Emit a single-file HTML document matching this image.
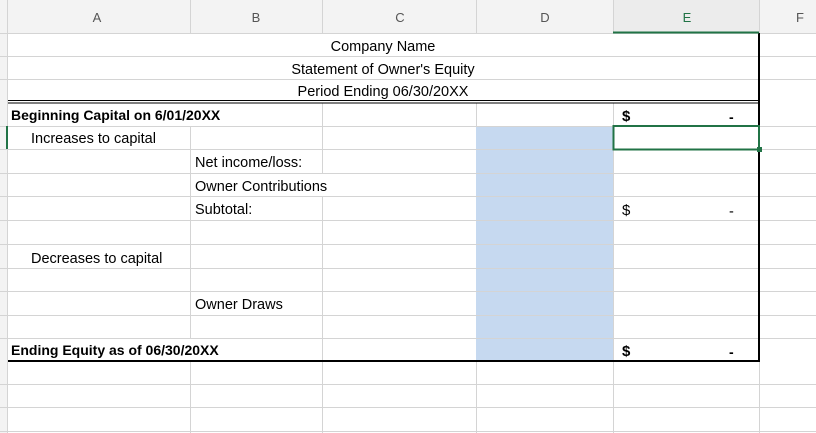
<!DOCTYPE html>
<html><head><style>
html,body{margin:0;padding:0;background:#fff;width:816px;height:433px;overflow:hidden}
svg{display:block}
text{font-family:"Liberation Sans",Arial,sans-serif;font-size:14.5px;fill:#000}
.h{fill:#555;font-size:13px}
.b{font-weight:bold;font-size:14px}
</style></head><body>
<svg width="816" height="433" viewBox="0 0 816 433" xmlns="http://www.w3.org/2000/svg">
<rect x="0" y="0" width="816" height="33" fill="#f3f3f3"/>
<rect x="613" y="0" width="146" height="33" fill="#ececec"/>
<rect x="0" y="0" width="7" height="433" fill="#f3f3f3"/>
<rect x="476" y="126" width="137" height="235" fill="#c6d9f0"/>
<g stroke="#d4d4d4" stroke-width="1">
 <line x1="7.5" y1="0" x2="7.5" y2="433"/>
 <line x1="190.5" y1="0" x2="190.5" y2="33"/>
 <line x1="322.5" y1="0" x2="322.5" y2="33"/>
 <line x1="476.5" y1="0" x2="476.5" y2="33"/>
 <line x1="613.5" y1="0" x2="613.5" y2="33"/>
 <line x1="759.5" y1="0" x2="759.5" y2="433"/>
 <line x1="0" y1="33.5" x2="816" y2="33.5"/>
 <line x1="0" y1="56.5" x2="816" y2="56.5"/>
 <line x1="0" y1="79.5" x2="816" y2="79.5"/>
 <line x1="0" y1="126.5" x2="816" y2="126.5"/>
 <line x1="0" y1="149.5" x2="816" y2="149.5"/>
 <line x1="0" y1="173.5" x2="816" y2="173.5"/>
 <line x1="0" y1="196.5" x2="816" y2="196.5"/>
 <line x1="0" y1="220.5" x2="816" y2="220.5"/>
 <line x1="0" y1="244.5" x2="816" y2="244.5"/>
 <line x1="0" y1="268.5" x2="816" y2="268.5"/>
 <line x1="0" y1="291.5" x2="816" y2="291.5"/>
 <line x1="0" y1="315.5" x2="816" y2="315.5"/>
 <line x1="0" y1="338.5" x2="816" y2="338.5"/>
 <line x1="0" y1="384.5" x2="816" y2="384.5"/>
 <line x1="0" y1="407.5" x2="816" y2="407.5"/>
 <line x1="0" y1="431.5" x2="816" y2="431.5"/>
 <line x1="190.5" y1="126" x2="190.5" y2="338"/>
 <line x1="190.5" y1="361" x2="190.5" y2="433"/>
 <line x1="322.5" y1="103" x2="322.5" y2="173"/>
 <line x1="322.5" y1="196" x2="322.5" y2="433"/>
 <line x1="476.5" y1="103" x2="476.5" y2="126"/>
 <line x1="476.5" y1="361" x2="476.5" y2="433"/>
 <line x1="613.5" y1="103" x2="613.5" y2="433"/>
</g>
<line x1="8" y1="100.5" x2="760" y2="100.5" stroke="#000" stroke-width="1"/>
<line x1="8" y1="103" x2="760" y2="103" stroke="#000" stroke-width="1"/>
<line x1="759" y1="33" x2="759" y2="362" stroke="#000" stroke-width="2"/>
<line x1="8" y1="361" x2="760" y2="361" stroke="#000" stroke-width="2"/>
<line x1="613" y1="32.5" x2="759" y2="32.5" stroke="#217346" stroke-width="2"/>
<rect x="613.5" y="126" width="145.5" height="23.5" fill="none" stroke="#217346" stroke-width="2"/>
<rect x="757" y="147" width="5" height="5" fill="#217346"/>
<line x1="7" y1="126" x2="7" y2="149" stroke="#217346" stroke-width="2"/>
<text class="h" x="97" y="22" text-anchor="middle">A</text>
<text class="h" x="256" y="22" text-anchor="middle">B</text>
<text class="h" x="400" y="22" text-anchor="middle">C</text>
<text class="h" x="545" y="22" text-anchor="middle">D</text>
<text class="h" x="687" y="22" text-anchor="middle" style="fill:#217346">E</text>
<text class="h" x="800" y="22" text-anchor="middle">F</text>
<text x="383" y="51" text-anchor="middle">Company Name</text>
<text x="383" y="74" text-anchor="middle">Statement of Owner's Equity</text>
<text x="383" y="96" text-anchor="middle">Period Ending 06/30/20XX</text>
<text class="b" x="11" y="120">Beginning Capital on 6/01/20XX</text>
<text x="31" y="143">Increases to capital</text>
<text x="195" y="167">Net income/loss:</text>
<text x="195" y="191">Owner Contributions</text>
<text x="195" y="214">Subtotal:</text>
<text x="31" y="263">Decreases to capital</text>
<text x="195" y="309">Owner Draws</text>
<text class="b" x="11" y="355">Ending Equity as of 06/30/20XX</text>
<text class="b" x="622" y="121" style="font-size:15px">$</text>
<text class="b" x="729" y="122">-</text>
<text x="622" y="215" style="font-size:15px">$</text>
<text x="729" y="216">-</text>
<text class="b" x="622" y="356" style="font-size:15px">$</text>
<text class="b" x="729" y="357">-</text>
</svg>
</body></html>
